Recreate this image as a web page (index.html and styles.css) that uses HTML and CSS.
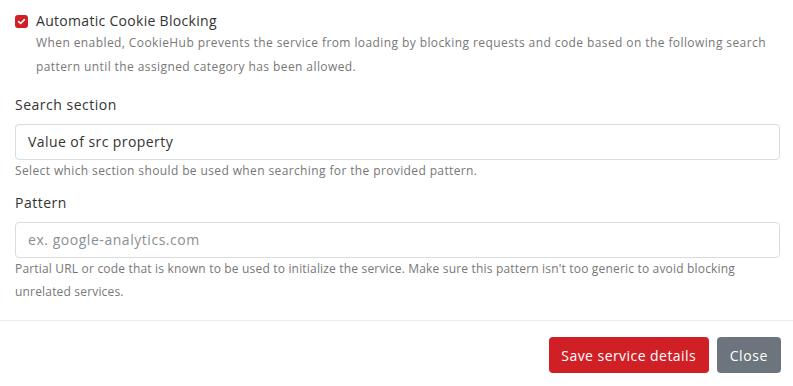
FILE: index.html
```html
<!DOCTYPE html>
<html lang="en">
<head>
    <meta charset="UTF-8">
    <meta name="viewport" content="width=device-width, initial-scale=1.0">
    <title>Service details - CookieHub</title>
    <link rel="stylesheet" href="styles.css">
</head>
<body>
    <div class="modal-body">
        <div class="form-check">
            <span class="check-box">
                <svg width="9" height="9" viewBox="0 0 9 9"><path d="M1.6 4.6 L3.6 6.5 L7.4 2.6" fill="none" stroke="#fff" stroke-width="1.6" stroke-linecap="round" stroke-linejoin="round"/></svg>
            </span>
            <div>
                <div class="check-label">Automatic Cookie Blocking</div>
                <div class="check-desc">When enabled, CookieHub prevents the service from loading by blocking requests and code based on the following search pattern until the assigned category has been allowed.</div>
            </div>
        </div>

        <div class="form-group">
            <label class="form-label">Search section</label>
            <div class="form-control">Value of src property</div>
            <div class="form-text">Select which section should be used when searching for the provided pattern.</div>
        </div>

        <div class="form-group pattern">
            <label class="form-label">Pattern</label>
            <div class="form-control placeholder">ex. google-analytics.com</div>
            <div class="form-text narrow">Partial URL or code that is known to be used to initialize the service. Make sure this pattern isn't too generic to avoid blocking unrelated services.</div>
        </div>
    </div>

    <div class="modal-footer">
        <button class="btn btn-save">Save service details</button>
        <button class="btn btn-close">Close</button>
    </div>
</body>
</html>
```

FILE: styles.css
```css
body {
    font-family: "Open Sans", Arial, sans-serif;
    margin: 0;
    padding: 0;
    background-color: #fff;
    color: #333;
    letter-spacing: 0.45px;
}
.modal-body {
    padding: 10px 13px 17px 15px;
}
.form-check {
    display: flex;
    gap: 8px;
}
.check-box {
    width: 13px;
    height: 13px;
    margin-top: 5px;
    border-radius: 3px;
    background-color: #d11f26;
    display: flex;
    align-items: center;
    justify-content: center;
    flex-shrink: 0;
}
.check-label {
    font-size: 14px;
    line-height: 21px;
    color: #333;
    letter-spacing: 0.3px;
}
.check-desc {
    font-size: 12px;
    line-height: 24px;
    color: #777;
    letter-spacing: 0.41px;
}
.form-group {
    margin-top: 15px;
}
.form-group.pattern {
    margin-top: 10px;
}
.form-label {
    display: block;
    font-size: 14px;
    line-height: 21px;
    color: #333;
    margin-bottom: 9px;
    letter-spacing: 0.5px;
}
.form-control {
    box-sizing: border-box;
    height: 36px;
    border: 1px solid #d9dcdf;
    border-radius: 4px;
    padding: 0 12px;
    font-size: 14px;
    line-height: 34px;
    color: #333;
    letter-spacing: 0.43px;
}
.form-control.placeholder {
    color: #8a8f94;
    letter-spacing: 0.54px;
}
.form-text {
    font-size: 12px;
    line-height: 23px;
    margin-top: -1px;
    color: #777;
    letter-spacing: 0.38px;
}
.form-text.narrow {
    letter-spacing: 0.18px;
}
.modal-footer {
    border-top: 1px solid #e9ecef;
    padding: 16px 12px 13px;
    display: flex;
    justify-content: flex-end;
    gap: 8px;
}
.btn {
    height: 36px;
    border: none;
    border-radius: 4px;
    padding: 0 12px;
    font-family: "Open Sans", Arial, sans-serif;
    font-size: 14px;
    font-weight: 500;
    color: white;
    cursor: pointer;
    letter-spacing: 0.45px;
}
.btn-save {
    background-color: #d11f26;
    padding: 0 12.5px;
}
.btn-close {
    background-color: #6c757d;
    padding: 0 13px;
    letter-spacing: 0.6px;
}
```
